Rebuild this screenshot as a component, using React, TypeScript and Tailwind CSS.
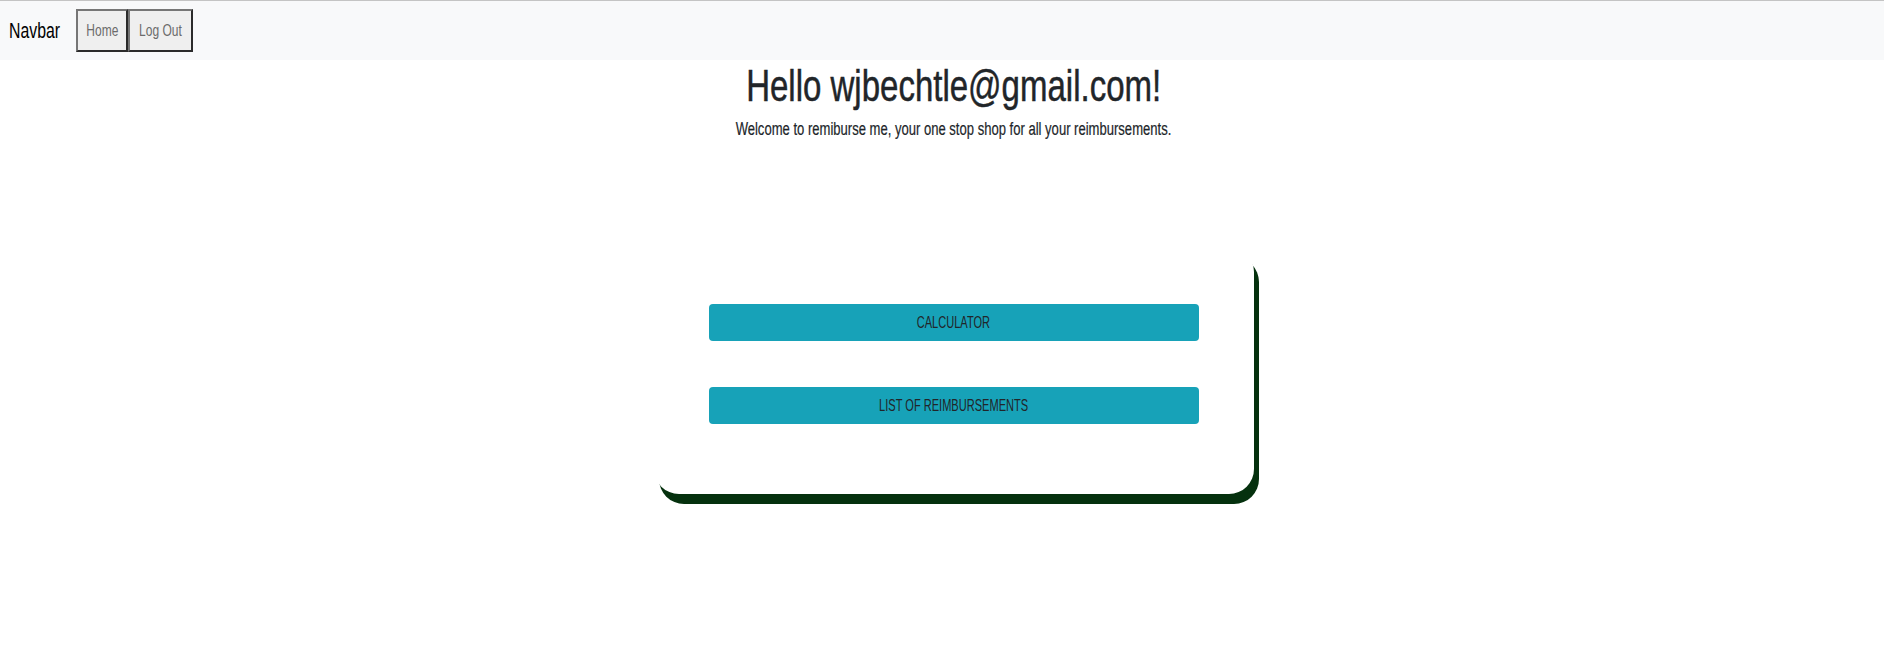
import { useState } from 'react';
import type { ReactNode } from 'react';

const font = { fontFamily: '"Liberation Sans", Arial, sans-serif' };

// squeezes a run of text horizontally so it reads like a condensed face
function Narrow({ children, className = 'scale-x-75 origin-center' }: { children: ReactNode; className?: string }) {
    return <span className={`inline-block whitespace-nowrap ${className}`}>{children}</span>;
}

function Navbar() {
    return (
        <nav className="flex h-[60px] items-center border-t border-[#c4c4c4] bg-[#f8f9fa] pl-[9px]">
            <span className="w-[67px] text-[22px] text-black">
                <Narrow className="scale-x-[0.72] origin-left">Navbar</Narrow>
            </span>
            <div className="flex h-[43px]">
                <button className="flex w-[52px] items-center justify-center border-2 border-t-[#767676] border-l-[#767676] border-b-[#2b2b2b] border-r-[#2b2b2b] bg-[#efefef] text-[16px] text-[#6b6b6b]">
                    <Narrow>Home</Narrow>
                </button>
                <button className="flex w-[65px] items-center justify-center border-2 border-t-[#767676] border-l-[#767676] border-b-[#2b2b2b] border-r-[#2b2b2b] bg-[#efefef] text-[16px] text-[#6b6b6b]">
                    <Narrow>Log Out</Narrow>
                </button>
            </div>
        </nav>
    );
}

function App() {
    const [email] = useState('wjbechtle@gmail.com');

    return (
        <div className="min-h-[656px] bg-white text-[#212529]" style={font}>
            <Navbar />
            <main className="flex flex-col items-center pl-[23px]">
                <h1 className="text-[44px] leading-[1.2] [-webkit-text-stroke:0.5px_#212529]">
                    <Narrow>Hello {email}!</Narrow>
                </h1>
                <p className="mt-[3px] text-[18px] leading-[1.5] [-webkit-text-stroke:0.2px_#212529]">
                    <Narrow className="scale-x-[0.725] origin-center">
                        Welcome to remiburse me, your one stop shop for all your reimbursements.
                    </Narrow>
                </p>
                <div className="mt-[104px] flex h-[247px] w-[600px] flex-col gap-[46px] rounded-[25px] bg-white px-[55px] pt-[57px] shadow-[5px_10px_0_#05310e]">
                    <button className="flex h-[37px] w-full items-center justify-center rounded-[4px] bg-[#17a2b8] text-[17px] uppercase text-[#212529]">
                        <Narrow className="scale-x-[0.65] origin-center">Calculator</Narrow>
                    </button>
                    <button className="flex h-[37px] w-full items-center justify-center rounded-[4px] bg-[#17a2b8] text-[17px] uppercase text-[#212529]">
                        <Narrow className="scale-x-[0.65] origin-center">List of Reimbursements</Narrow>
                    </button>
                </div>
            </main>
        </div>
    );
}

export default App;
